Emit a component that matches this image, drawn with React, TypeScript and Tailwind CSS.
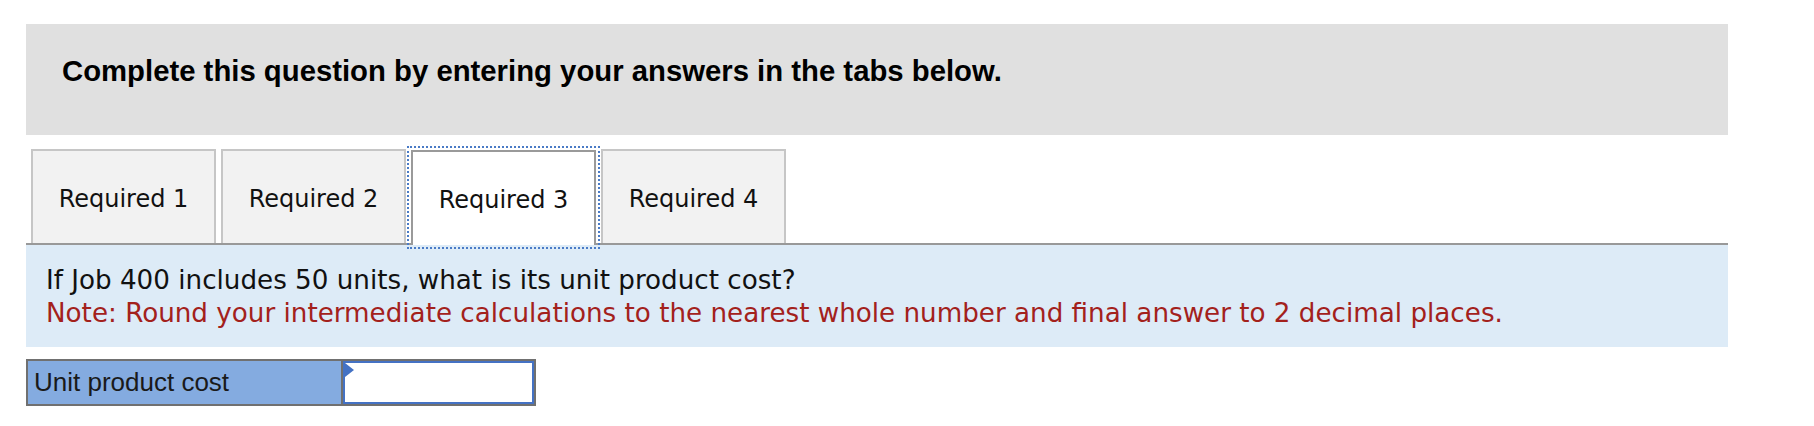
import { useState } from "react";

const tabs = ["Required 1", "Required 2", "Required 3", "Required 4"];

const App = () => {
  const [active, setActive] = useState(2);
  const [value, setValue] = useState("");

  return (
    <main className="min-h-screen bg-white pl-[26px] pt-[24px]">
      <div className="w-[1702px]">
        <div className="h-[111px] bg-[#e0e0e0] pl-[36px] pt-[30px]">
          <h1 className="font-['Liberation_Sans',Arial,sans-serif] text-[29.3px] font-bold leading-[33px] text-black">
            Complete this question by entering your answers in the tabs below.
          </h1>
        </div>

        <div className="mt-[14px] flex items-end gap-[5px] border-b-2 border-[#999999] pl-[5px]">
          {tabs.map((t, i) =>
            i === active ? (
              <button
                key={t}
                onClick={() => setActive(i)}
                className="relative z-10 mb-[-2px] flex h-[95px] w-[185px] items-center justify-center border-x-2 border-t-2 border-[#9a9a9a] bg-white pt-[3px] font-['DejaVu_Sans',Verdana,sans-serif] text-[24px] text-[#111] outline-2 outline-offset-2 outline-dotted outline-[#4a7bc6]"
              >
                {t}
              </button>
            ) : (
              <button
                key={t}
                onClick={() => setActive(i)}
                className="flex h-[94px] w-[185px] items-center justify-center border-x-2 border-t-2 border-[#c6c6c6] bg-[#f2f2f2] pt-[4px] font-['DejaVu_Sans',Verdana,sans-serif] text-[24px] text-[#111]"
              >
                {t}
              </button>
            )
          )}
        </div>

        <div className="h-[102px] bg-[#ddebf7] pl-[20px] pt-[19px] font-['DejaVu_Sans',Verdana,sans-serif] text-[26.2px] leading-[33px]">
          <p className="text-[#111]">If Job 400 includes 50 units, what is its unit product cost?</p>
          <p className="text-[#a3211c]">
            Note: Round your intermediate calculations to the nearest whole number and final answer to 2 decimal places.
          </p>
        </div>

        <div className="mt-[12px] flex h-[47px] w-[510px] border-2 border-[#707070]">
          <div className="flex w-[313px] items-center bg-[#84abe0] pl-[6px] font-['Liberation_Sans',Arial,sans-serif] text-[26px] text-[#1a1a1a]">
            Unit product cost
          </div>
          <div className="w-[2px] bg-[#707070]" />
          <div className="relative flex-1 border-2 border-[#4472c4] bg-white">
            <svg className="absolute left-0 top-0" width="10" height="15" viewBox="0 0 10 15">
              <polygon points="0,0 9,7 0,14" fill="#4472c4" />
            </svg>
            <input
              value={value}
              onChange={(e) => setValue(e.target.value)}
              className="h-full w-full bg-transparent px-2 text-right font-['Liberation_Sans',Arial,sans-serif] text-[22px] outline-none"
            />
          </div>
        </div>
      </div>
    </main>
  );
};

export default App;
